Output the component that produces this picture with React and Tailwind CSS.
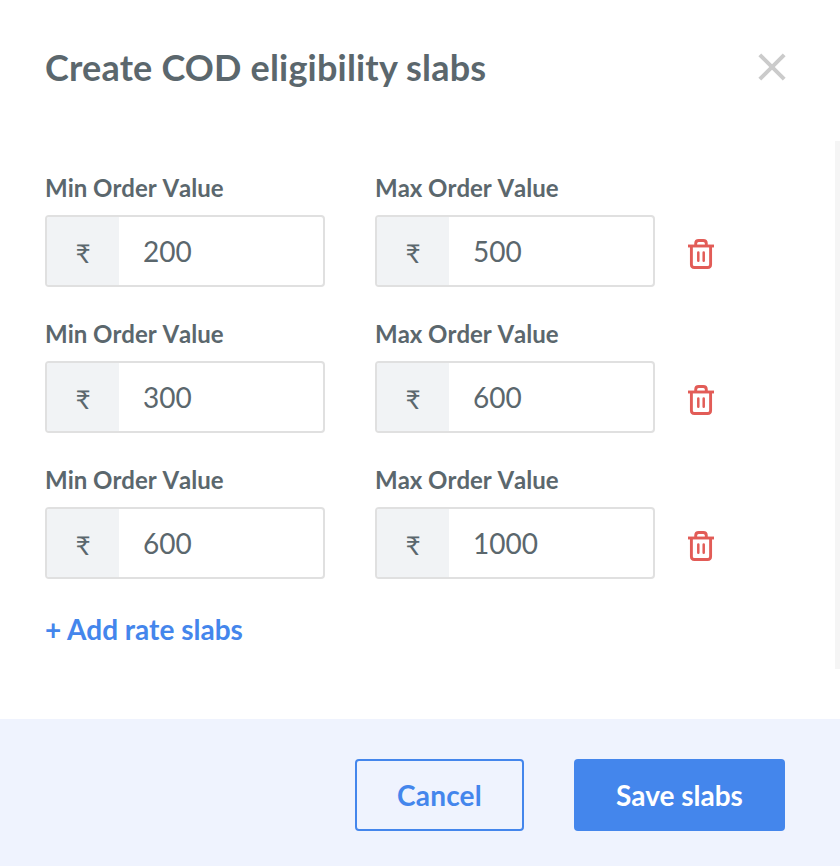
import React, { useState } from 'react';

const INITIAL_SLABS = [
  { id: 1, min: '200', max: '500' },
  { id: 2, min: '300', max: '600' },
  { id: 3, min: '600', max: '1000' },
];

const CloseIcon = () => (
  <svg width="28" height="28" viewBox="0 0 28 28" fill="none" stroke="#cbcbcb" strokeWidth="4">
    <path d="M1.8 1.8L26.2 26.2M26.2 1.8L1.8 26.2" />
  </svg>
);

const TrashIcon = () => (
  <svg width="28" height="30" viewBox="0 0 28 30" fill="none" stroke="#e25c57" strokeWidth="2.9">
    <path d="M1 7H27" />
    <path d="M8.7 7V4.5Q8.7 1.5 11.7 1.5H16.3Q19.3 1.5 19.3 4.5V7" />
    <path d="M4.4 7V25.5Q4.4 28.5 7.4 28.5H20.6Q23.6 28.5 23.6 25.5V7" />
    <path d="M11.3 13.6V21.7M16.7 13.6V21.7" strokeWidth="2.5" strokeLinecap="round" />
  </svg>
);

function AmountField({ label, value, onChange }) {
  return (
    <label className="block w-[280px]">
      <span className="block h-[30px] text-[24px] leading-[30px] font-bold tracking-[-0.03px] text-[#5b676d] [font-kerning:none]">{label}</span>
      <span className="mt-[12px] flex h-[72px] overflow-hidden rounded-[4px] border-2 border-[#e0e0e0] bg-white">
        <span className="flex w-[72px] shrink-0 items-center justify-center bg-[#f1f3f5] pt-1 text-[26px] text-[#5b676d]">₹</span>
        <input
          className="w-full min-w-0 px-6 text-[28px] text-[#5b676d] outline-none"
          value={value}
          onChange={(e) => onChange(e.target.value)}
        />
      </span>
    </label>
  );
}

export default function App() {
  const [slabs, setSlabs] = useState(INITIAL_SLABS);

  const updateSlab = (id, key, value) => {
    setSlabs(slabs.map((slab) => (slab.id === id ? { ...slab, [key]: value } : slab)));
  };

  const addSlab = () => setSlabs([...slabs, { id: Date.now(), min: '', max: '' }]);

  const removeSlab = (id) => setSlabs(slabs.filter((slab) => slab.id !== id));

  return (
    <div className="flex h-[866px] w-[840px] flex-col overflow-hidden bg-white font-['Lato',sans-serif]">
      <header className="flex h-[141px] shrink-0 items-start justify-between pt-[44px] pr-[54px] pl-[45px]">
        <h1 className="text-[36px] leading-[46px] font-bold tracking-[0.18px] text-[#5b676d]">Create COD eligibility slabs</h1>
        <button type="button" aria-label="Close" className="mt-[9px]">
          <CloseIcon />
        </button>
      </header>

      {/* Slab rows */}
      <main className="flex h-[528px] shrink-0 flex-col overflow-hidden border-r-[5px] border-[#f5f5f5] pt-[32px] pl-[45px]">
        <div className="flex shrink-0 flex-col gap-[32px]">
          {slabs.map((slab) => (
            <div key={slab.id} className="flex">
              <AmountField label="Min Order Value" value={slab.min} onChange={(v) => updateSlab(slab.id, 'min', v)} />
              <div className="ml-[50px]">
                <AmountField label="Max Order Value" value={slab.max} onChange={(v) => updateSlab(slab.id, 'max', v)} />
              </div>
              <button type="button" aria-label="Delete slab" className="mt-[66px] ml-[32px] self-start" onClick={() => removeSlab(slab.id)}>
                <TrashIcon />
              </button>
            </div>
          ))}
        </div>
        <button type="button" className="mt-8 self-start text-[28px] leading-[36px] font-bold text-[#4486ec]" onClick={addSlab}>
          + Add rate slabs
        </button>
      </main>

      <footer className="mt-auto flex h-[147px] shrink-0 items-start justify-end gap-[50px] bg-[#eff3fe] pt-[40px] pr-[55px] text-[28px] font-bold">
        <button type="button" className="h-[72px] w-[169px] rounded-[4px] border-2 border-[#4486ec] tracking-[0.2px] text-[#4486ec]">Cancel</button>
        <button type="button" className="h-[72px] w-[211px] rounded-[4px] bg-[#4486ec] text-white">Save slabs</button>
      </footer>
    </div>
  );
}
